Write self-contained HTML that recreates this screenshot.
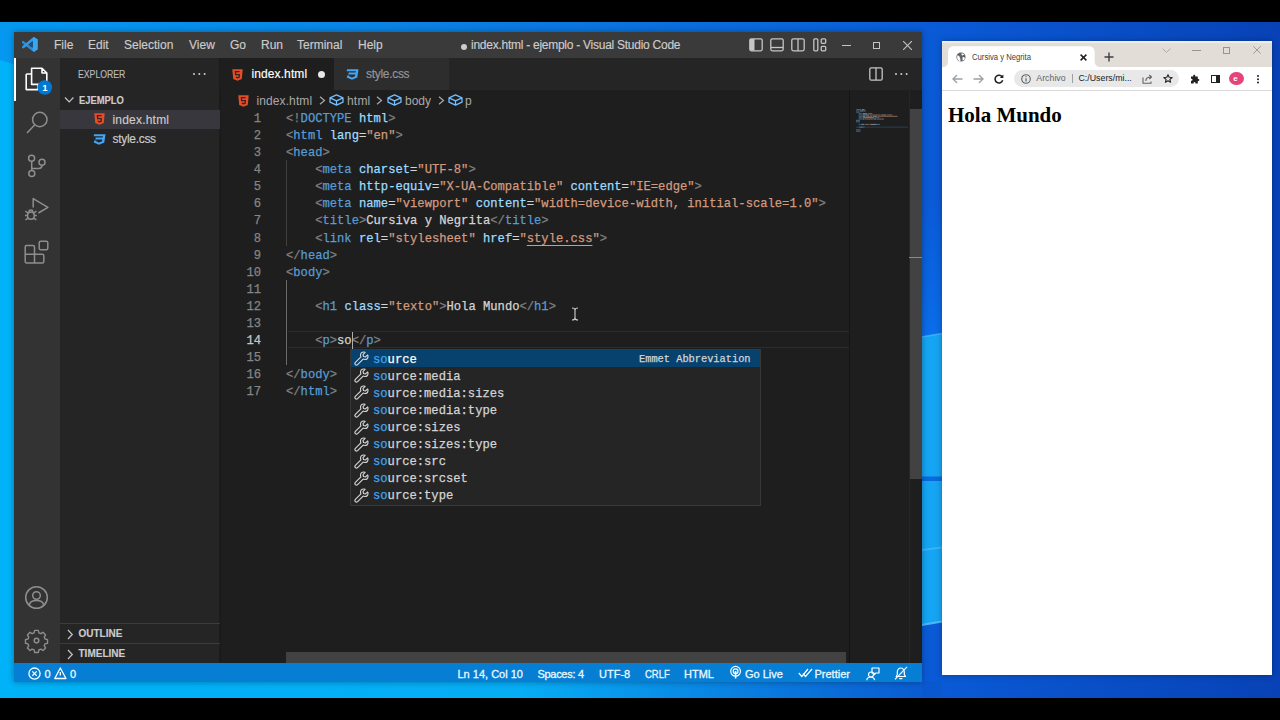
<!DOCTYPE html>
<html><head><meta charset="utf-8">
<style>
*{box-sizing:border-box;margin:0;padding:0}
html,body{width:1280px;height:720px;overflow:hidden;background:#000;font-family:"Liberation Sans",sans-serif}
.a{position:absolute}
#desk{left:0;top:22px;width:1280px;height:676px;overflow:hidden}
#vsc{left:14px;top:32px;width:908px;height:650px;background:#1e1e1e;overflow:hidden;box-shadow:0 0 6px rgba(0,0,0,.35)}
#title{left:0;top:0;width:908px;height:26px;background:#3a3a3a;color:#cccccc;font-size:12px}
#title span.m{position:absolute;top:6px;-webkit-text-stroke:0.15px currentColor}
#act{left:0;top:26px;width:46px;height:605px;background:#333333}
#side{left:46px;top:26px;width:160px;height:605px;background:#252526;color:#cccccc;font-size:12px;-webkit-text-stroke:0.15px currentColor}
#tabs{left:206px;top:26px;width:702px;height:32px;background:#252526;-webkit-text-stroke:0.15px currentColor}
#status{left:0;top:631px;width:908px;height:19px;background:#057ed4;color:#fff;font-size:11px}
#status span{position:absolute;top:4.7px;white-space:nowrap;-webkit-text-stroke:0.3px #eaf8ff;color:#eaf8ff}
.code{font-family:"Liberation Mono",monospace;font-size:12.17px;white-space:pre;line-height:17.1px;-webkit-text-stroke:0.25px currentColor}
.ln{position:absolute;left:206px;width:40px;text-align:right;color:#858585}
.cl{position:absolute;left:272px;color:#d4d4d4}
.g{color:#808080}.t{color:#569cd6}.at{color:#9cdcfe}.s{color:#d39a7e}.tx{color:#d4d4d4}u{text-underline-offset:3px;text-decoration-thickness:1px}
#chrome{left:942px;top:41px;width:330px;height:634px;background:#fff;overflow:hidden;box-shadow:0 0 6px rgba(0,0,0,.3)}
</style></head><body>
<div id="desk" class="a"><svg width="1280" height="676" viewBox="0 22 1280 676" style="position:absolute;left:0;top:0">
  <defs>
    <linearGradient id="bg" x1="0" y1="0" x2="1" y2="0"><stop offset="0" stop-color="#0598f0"/><stop offset="0.3" stop-color="#0a84e4"/><stop offset="0.6" stop-color="#0a68da"/><stop offset="0.73" stop-color="#0a5ad6"/><stop offset="1" stop-color="#0842b6"/></linearGradient>
    <linearGradient id="beam" x1="0" y1="0" x2="1" y2="0"><stop offset="0" stop-color="#00b2f8"/><stop offset="0.85" stop-color="#0aaaf4"/><stop offset="1" stop-color="#16a4f2"/></linearGradient>
    <linearGradient id="bfade" x1="0" y1="0" x2="1" y2="0"><stop offset="0" stop-color="#0958cf" stop-opacity="0"/><stop offset="1" stop-color="#0958cf" stop-opacity="1"/></linearGradient>
    <linearGradient id="gapg" x1="0" y1="0" x2="0" y2="1"><stop offset="0" stop-color="#0a6ae8" stop-opacity="0"/><stop offset="0.55" stop-color="#0a6ae8" stop-opacity="0"/><stop offset="1" stop-color="#0a70ec" stop-opacity="0.9"/></linearGradient>
  </defs>
  <rect x="0" y="22" width="1280" height="676" fill="url(#bg)"/>
  <rect x="915" y="22" width="30" height="316" fill="url(#gapg)"/>
  <polygon points="0,60 922,337 945,333 945,621 922,624.5 922,698 0,698" fill="url(#beam)"/>
  <rect x="520" y="681" width="422" height="17" fill="url(#bfade)"/>
  <line x1="920" y1="337.3" x2="945" y2="333" stroke="#4cc0ff" stroke-width="1.5" opacity="0.7"/>
  <line x1="880" y1="632.2" x2="945" y2="621" stroke="#5ccaff" stroke-width="2" opacity="0.8"/>
  <rect x="900" y="476.5" width="45" height="4.5" fill="#0a6adc"/>
  <polygon points="900,552 945,546 945,548 900,554" fill="#50c0fa" opacity="0.6"/>
</svg></div>

<div id="vsc" class="a">
  <div id="title" class="a">
    <svg class="a" style="left:8px;top:5px" width="16" height="15" viewBox="0 0 16 15"><g stroke-linecap="round"><line x1="1" y1="5.2" x2="12" y2="13.6" stroke="#2a8ad8" stroke-width="2.6"/><line x1="1.4" y1="10" x2="12" y2="1.3" stroke="#3098e6" stroke-width="2.6"/></g><polygon points="10.6,1.6 12.4,0.4 15.8,2.2 15.8,12.4 12.4,14.4 10.6,13.4" fill="#3aa6f0"/><polygon points="10.8,4.2 10.8,10.6 7.3,7.4" fill="#1c4f80"/></svg>
    <span class="m" style="left:40px">File</span>
    <span class="m" style="left:74px">Edit</span>
    <span class="m" style="left:110px">Selection</span>
    <span class="m" style="left:175px">View</span>
    <span class="m" style="left:216px">Go</span>
    <span class="m" style="left:247px">Run</span>
    <span class="m" style="left:283px">Terminal</span>
    <span class="m" style="left:344px">Help</span>
    <div class="a" style="left:447px;top:11.5px;width:6px;height:6px;border-radius:50%;background:#cccccc"></div>
    <span class="m" style="left:457px;letter-spacing:-0.26px">index.html - ejemplo - Visual Studio Code</span>
    <svg class="a" style="left:735px;top:6px" width="14" height="14" viewBox="0 0 14 14" fill="none" stroke="#c5c5c5" stroke-width="1.3"><rect x="0.8" y="0.8" width="12.4" height="12" rx="1.5"/><rect x="1" y="1" width="4.5" height="11.6" fill="#c5c5c5" stroke="none"/></svg>
    <svg class="a" style="left:756px;top:6px" width="14" height="14" viewBox="0 0 14 14" fill="none" stroke="#c5c5c5" stroke-width="1.3"><rect x="0.8" y="0.8" width="12.4" height="12" rx="1.5"/><line x1="1" y1="9.5" x2="13" y2="9.5"/></svg>
    <svg class="a" style="left:777px;top:6px" width="14" height="14" viewBox="0 0 14 14" fill="none" stroke="#c5c5c5" stroke-width="1.3"><rect x="0.8" y="0.8" width="12.4" height="12" rx="1.5"/><line x1="7" y1="1" x2="7" y2="13"/></svg>
    <svg class="a" style="left:799px;top:6px" width="14" height="14" viewBox="0 0 14 14" fill="none" stroke="#c5c5c5" stroke-width="1.3"><rect x="0.8" y="0.8" width="4" height="12" rx="1"/><rect x="8.2" y="0.8" width="4.5" height="4.5" rx="1"/><rect x="8.2" y="8.3" width="4.5" height="4.5" rx="1"/></svg>
    <div class="a" style="left:828px;top:13px;width:9px;height:1px;background:#c5c5c5"></div>
    <div class="a" style="left:859px;top:10px;width:7px;height:7px;border:1px solid #c5c5c5"></div>
    <svg class="a" style="left:889px;top:9px" width="9" height="9" viewBox="0 0 9 9" stroke="#c5c5c5" stroke-width="1.1"><line x1="0" y1="0" x2="9" y2="9"/><line x1="9" y1="0" x2="0" y2="9"/></svg>
  </div>
  <div id="act" class="a">
    <div class="a" style="left:0;top:0;width:2px;height:43px;background:#ffffff"></div>
    <svg class="a" style="left:0;top:0" width="46" height="604" viewBox="0 0 46 604" fill="none" stroke-linejoin="round">
      <g stroke="#ffffff" stroke-width="1.6">
        <path d="M12.2 16 H17.6 M12.2 16 V31.6 H23.9 V26.4 M17.6 10.3 H28 L32.8 15 V26.4 H17.6 Z M28 10.3 V15 H32.8"/>
      </g>
      <circle cx="30.8" cy="29.5" r="7.3" fill="#0078d4"/>
      <text x="30.8" y="33" fill="#fff" font-family="Liberation Sans" font-weight="bold" font-size="9.5" text-anchor="middle">1</text>
      <g stroke="#8e8e8e" stroke-width="1.5">
        <circle cx="25.8" cy="61.5" r="7.2"/>
        <line x1="20.6" y1="66.9" x2="13" y2="75"/>
        <circle cx="17.6" cy="100.3" r="3"/>
        <circle cx="17.8" cy="115.4" r="3"/>
        <circle cx="28" cy="104.3" r="3"/>
        <path d="M17.7 103.3 V112.4 M28 107.3 C28 109.5 26.5 110.5 24.5 110.5 H17.8"/>
        <path d="M19.2 149.6 V140.6 L33.9 149.3 L24.4 155"/>
        <path d="M13.6 157 C13.6 153 20.2 153 20.2 157 V158.5 C20.2 162.2 13.6 162.2 13.6 158.5 Z M14.8 153.8 C15 151.5 18.8 151.5 19 153.8 M11.4 153 L13.8 155 M22.4 153 L20 155 M11 157.6 H13.6 M22.8 157.6 H20.2 M11.4 162 L13.9 160.2 M22.4 162 L19.9 160.2"/>
        <path d="M12.6 187.4 H19 Q20.5 187.4 20.5 188.9 V196.2 H28.3 Q29.8 196.2 29.8 197.7 V203.4 Q29.8 204.9 28.3 204.9 H12.7 Q11.2 204.9 11.2 203.4 V188.9 Q11.2 187.4 12.6 187.4 Z M11.2 196.2 H20.5 V204.9"/>
        <rect x="25.2" y="183.2" width="8.6" height="8.6" rx="1.5"/>
        <circle cx="22.5" cy="539.5" r="10.8"/>
        <circle cx="22.5" cy="537.5" r="3.8"/>
        <path d="M15.2 547.3 C15.8 543.8 18.5 542.5 22.5 542.5 C26.5 542.5 29.2 543.8 29.8 547.3"/>
      </g>
      <g stroke="#8e8e8e" stroke-width="1.5">
        <path transform="translate(22.5 582.6) scale(0.92) translate(-22.5 -582.6)" id="gear" d="M20.5 571.5 h4 l0.6 2.7 l2.2 0.9 l2.3 -1.5 l2.8 2.8 l-1.5 2.3 l0.9 2.2 l2.7 0.6 v4 l-2.7 0.6 l-0.9 2.2 l1.5 2.3 l-2.8 2.8 l-2.3 -1.5 l-2.2 0.9 l-0.6 2.7 h-4 l-0.6 -2.7 l-2.2 -0.9 l-2.3 1.5 l-2.8 -2.8 l1.5 -2.3 l-0.9 -2.2 l-2.7 -0.6 v-4 l2.7 -0.6 l0.9 -2.2 l-1.5 -2.3 l2.8 -2.8 l2.3 1.5 l2.2 -0.9 z"/>
        <circle cx="22.5" cy="582.6" r="2.3"/>
      </g>
    </svg>
  </div>
  <div id="side" class="a">
    <div class="a" style="left:159px;top:0;width:2px;height:605px;background:#1b1b1b"></div>
    <span class="a" style="left:18px;top:10.5px;font-size:10px;color:#bbbbbb;transform:scaleX(0.87);transform-origin:0 0">EXPLORER</span>
    <div class="a" style="left:132.5px;top:15px;width:2.2px;height:2.2px;border-radius:50%;background:#cccccc;box-shadow:5.3px 0 0 #cccccc,10.6px 0 0 #cccccc"></div>
    <svg class="a" style="left:4px;top:38px" width="11" height="8" viewBox="0 0 11 8" fill="none" stroke="#c5c5c5" stroke-width="1.2"><path d="M1 1.5 L5.2 5.8 L9.4 1.5"/></svg>
    <span class="a" style="left:18.5px;top:36.5px;font-size:10px;font-weight:bold;color:#cccccc;transform:scaleX(0.94);transform-origin:0 0">EJEMPLO</span>
    <div class="a" style="left:0;top:51.5px;width:160px;height:19.5px;background:#37373d"></div>
    <svg class="a" style="left:33.5px;top:55px" width="11" height="12" viewBox="0 0 11 12"><path fill="#e44d26" d="M0.3 0.3 H10.7 L9.8 10 L5.5 11.7 L1.2 10 Z"/><path fill="none" stroke="#3a2420" stroke-width="1.3" d="M7.6 2.6 H3.4 L3.7 5.6 H7.3 L7.1 8.2 L5.5 8.9 L3.9 8.2"/></svg>
    <span class="a" style="left:52.5px;top:54.5px;color:#cccccc;letter-spacing:0.2px">index.html</span>
    <svg class="a" style="left:32.5px;top:75.5px" width="13" height="11" viewBox="0 0 13 11"><path fill="#42a5f5" d="M1 0.3 H12.5 L11.3 8.5 L6 10.8 L0.8 8.5 L1.2 6.5 H3.3 L3.1 7.3 L6 8.5 L9 7.3 L9.3 5.5 H2.3 L2.7 3.5 H9.6 L9.9 2.2 H0.7 Z"/></svg>
    <span class="a" style="left:52.5px;top:74px;color:#cccccc;letter-spacing:-0.3px">style.css</span>
    <div class="a" style="left:0;top:565px;width:160px;height:1px;background:#3c3c3c"></div>
    <svg class="a" style="left:6px;top:571px" width="8" height="11" viewBox="0 0 8 11" fill="none" stroke="#c5c5c5" stroke-width="1.2"><path d="M2 1 L6.3 5.5 L2 10"/></svg>
    <span class="a" style="left:18.5px;top:569.5px;font-size:10px;font-weight:bold;color:#cccccc;transform:scaleX(1);transform-origin:0 0">OUTLINE</span>
    <div class="a" style="left:0;top:585px;width:160px;height:1px;background:#3c3c3c"></div>
    <svg class="a" style="left:6px;top:591px" width="8" height="11" viewBox="0 0 8 11" fill="none" stroke="#c5c5c5" stroke-width="1.2"><path d="M2 1 L6.3 5.5 L2 10"/></svg>
    <span class="a" style="left:18.5px;top:589.5px;font-size:10px;font-weight:bold;color:#cccccc;transform:scaleX(1);transform-origin:0 0">TIMELINE</span>
  </div>
  <div id="tabs" class="a">
    <div class="a" style="left:0;top:0;width:114px;height:32px;background:#1e1e1e"></div>
    <div class="a" style="left:114px;top:0;width:115px;height:32px;background:#2d2d2d"></div>
    <svg class="a" style="left:12px;top:10.5px" width="11" height="12" viewBox="0 0 11 12"><path fill="#e44d26" d="M0.3 0.3 H10.7 L9.8 10 L5.5 11.7 L1.2 10 Z"/><path fill="none" stroke="#3a2420" stroke-width="1.3" d="M7.6 2.6 H3.4 L3.7 5.6 H7.3 L7.1 8.2 L5.5 8.9 L3.9 8.2"/></svg>
    <span class="a" style="left:31.5px;top:9.2px;font-size:12px;color:#ffffff;letter-spacing:0.1px">index.html</span>
    <div class="a" style="left:97.5px;top:12.5px;width:7px;height:7px;border-radius:50%;background:#e8e8e8"></div>
    <svg class="a" style="left:126px;top:10.5px" width="13" height="11" viewBox="0 0 13 11"><path fill="#42a5f5" d="M1 0.3 H12.5 L11.3 8.5 L6 10.8 L0.8 8.5 L1.2 6.5 H3.3 L3.1 7.3 L6 8.5 L9 7.3 L9.3 5.5 H2.3 L2.7 3.5 H9.6 L9.9 2.2 H0.7 Z"/></svg>
    <span class="a" style="left:146px;top:9.2px;font-size:12px;color:#969696;letter-spacing:-0.3px">style.css</span>
    <svg class="a" style="left:649px;top:9px" width="14" height="14" viewBox="0 0 14 14" fill="none" stroke="#c5c5c5" stroke-width="1.3"><rect x="0.8" y="0.8" width="12.4" height="12.4" rx="1.5"/><line x1="7" y1="1" x2="7" y2="13"/></svg>
    <div class="a" style="left:675px;top:15px;width:2.2px;height:2.2px;border-radius:50%;background:#cccccc;box-shadow:5.3px 0 0 #cccccc,10.6px 0 0 #cccccc"></div>
  </div>
  <div id="crumbs" class="a" style="left:206px;top:59px;width:702px;height:20px;font-size:12px;color:#a9a9a9">
    <svg class="a" style="left:18px;top:3.5px" width="11" height="12" viewBox="0 0 11 12"><path fill="#e44d26" d="M0.3 0.3 H10.7 L9.8 10 L5.5 11.7 L1.2 10 Z"/><path fill="none" stroke="#3a2420" stroke-width="1.3" d="M7.6 2.6 H3.4 L3.7 5.6 H7.3 L7.1 8.2 L5.5 8.9 L3.9 8.2"/></svg>
    <span class="a" style="left:36.5px;top:3px;letter-spacing:0.1px">index.html</span>
    <svg class="a" style="left:98.5px;top:4.5px" width="7" height="9" viewBox="0 0 7 9" fill="none" stroke="#a9a9a9" stroke-width="1.2"><path d="M1 0.8 L5.5 4.5 L1 8.2"/></svg>
    <svg class="a" style="left:108.5px;top:3.2px" width="15" height="12" viewBox="0 0 15 12" fill="none" stroke="#75beff" stroke-width="1.3" stroke-linejoin="round"><path d="M1 3.8 L7.5 0.8 L14 3.8 V8.2 L7.5 11.2 L1 8.2 Z M1 3.8 L7.5 6.8 L14 3.8 M7.5 6.8 V11.2"/></svg>
    <span class="a" style="left:127px;top:3px;letter-spacing:0.2px">html</span>
    <svg class="a" style="left:156px;top:4.5px" width="7" height="9" viewBox="0 0 7 9" fill="none" stroke="#a9a9a9" stroke-width="1.2"><path d="M1 0.8 L5.5 4.5 L1 8.2"/></svg>
    <svg class="a" style="left:166.5px;top:3.2px" width="15" height="12" viewBox="0 0 15 12" fill="none" stroke="#75beff" stroke-width="1.3" stroke-linejoin="round"><path d="M1 3.8 L7.5 0.8 L14 3.8 V8.2 L7.5 11.2 L1 8.2 Z M1 3.8 L7.5 6.8 L14 3.8 M7.5 6.8 V11.2"/></svg>
    <span class="a" style="left:185px;top:3px">body</span>
    <svg class="a" style="left:217.5px;top:4.5px" width="7" height="9" viewBox="0 0 7 9" fill="none" stroke="#a9a9a9" stroke-width="1.2"><path d="M1 0.8 L5.5 4.5 L1 8.2"/></svg>
    <svg class="a" style="left:227.5px;top:3.2px" width="15" height="12" viewBox="0 0 15 12" fill="none" stroke="#75beff" stroke-width="1.3" stroke-linejoin="round"><path d="M1 3.8 L7.5 0.8 L14 3.8 V8.2 L7.5 11.2 L1 8.2 Z M1 3.8 L7.5 6.8 L14 3.8 M7.5 6.8 V11.2"/></svg>
    <span class="a" style="left:245px;top:3px">p</span>
  </div>
  <div class="a code" style="left:200px;top:78.9px;width:47px;text-align:right;color:#858585">1
2
3
4
5
6
7
8
9
10
11
12
13
<span style="color:#c6c6c6">14</span>
15
16
17</div>
  <div class="a code" style="left:272px;top:78.9px;color:#d4d4d4"><span class="g">&lt;!</span><span class="t">DOCTYPE</span> <span class="at">html</span><span class="g">&gt;</span>
<span class="g">&lt;</span><span class="t">html</span> <span class="at">lang</span><span class="tx">=</span><span class="s">"en"</span><span class="g">&gt;</span>
<span class="g">&lt;</span><span class="t">head</span><span class="g">&gt;</span>
    <span class="g">&lt;</span><span class="t">meta</span> <span class="at">charset</span><span class="tx">=</span><span class="s">"UTF-8"</span><span class="g">&gt;</span>
    <span class="g">&lt;</span><span class="t">meta</span> <span class="at">http-equiv</span><span class="tx">=</span><span class="s">"X-UA-Compatible"</span> <span class="at">content</span><span class="tx">=</span><span class="s">"IE=edge"</span><span class="g">&gt;</span>
    <span class="g">&lt;</span><span class="t">meta</span> <span class="at">name</span><span class="tx">=</span><span class="s">"viewport"</span> <span class="at">content</span><span class="tx">=</span><span class="s">"width=device-width, initial-scale=1.0"</span><span class="g">&gt;</span>
    <span class="g">&lt;</span><span class="t">title</span><span class="g">&gt;</span><span class="tx">Cursiva y Negrita</span><span class="g">&lt;/</span><span class="t">title</span><span class="g">&gt;</span>
    <span class="g">&lt;</span><span class="t">link</span> <span class="at">rel</span><span class="tx">=</span><span class="s">"stylesheet"</span> <span class="at">href</span><span class="tx">=</span><span class="s">"<u>style.css</u>"</span><span class="g">&gt;</span>
<span class="g">&lt;/</span><span class="t">head</span><span class="g">&gt;</span>
<span class="g">&lt;</span><span class="t">body</span><span class="g">&gt;</span>

    <span class="g">&lt;</span><span class="t">h1</span> <span class="at">class</span><span class="tx">=</span><span class="s">"texto"</span><span class="g">&gt;</span><span class="tx">Hola Mundo</span><span class="g">&lt;/</span><span class="t">h1</span><span class="g">&gt;</span>

    <span class="g">&lt;</span><span class="t">p</span><span class="g">&gt;</span><span class="tx">so</span><span class="g">&lt;/</span><span class="t">p</span><span class="g">&gt;</span>

<span class="g">&lt;/</span><span class="t">body</span><span class="g">&gt;</span>
<span class="g">&lt;/</span><span class="t">html</span><span class="g">&gt;</span></div>

  <!-- editor extras -->
  <div class="a" style="left:274px;top:299.2px;width:562px;height:17.3px;border-top:1.5px solid #2c2c2c;border-bottom:1.5px solid #2c2c2c"></div>
  <div class="a" style="left:272px;top:128.3px;width:1px;height:85.5px;background:#404040"></div>
  <div class="a" style="left:272px;top:247.5px;width:1.2px;height:85.5px;background:#6a6a6a"></div>
  <div class="a" style="left:337.5px;top:299.8px;width:1.6px;height:17px;background:#aeafad"></div>
  <svg class="a" style="left:557px;top:275px" width="8" height="14" viewBox="0 0 8 14" fill="none" stroke="#d0d0d0" stroke-width="1.1"><path d="M1 1 C3 1 4 1.5 4 3 V11 C4 12.5 3 13 1 13 M7 1 C5 1 4 1.5 4 3 M4 11 C4 12.5 5 13 7 13"/></svg>
  <div class="a" style="left:835px;top:58px;width:1px;height:573px;background:#141414"></div>
  <div class="a" style="left:894.5px;top:77px;width:13.5px;height:369.5px;background:#424242"></div>
  <div class="a" style="left:894.5px;top:58px;width:1px;height:573px;background:#262626"></div>
  <div class="a" style="left:894.5px;top:224.5px;width:13.5px;height:1.5px;background:#8a8a8a"></div>
  <div class="a" style="left:271.5px;top:620px;width:560px;height:10.5px;background:#424242"></div>
  <div id="suggest" class="a" style="left:336px;top:316.5px;width:410.5px;height:157.5px;background:#252526;border:1px solid #383838">
  </div>
  <div class="a" style="left:337px;top:317.5px;width:409px;height:17.8px;background:#07416e"></div>
    <svg class="a" style="left:340px;top:319.2px" width="15" height="15" viewBox="0 0 15 15" fill="none" stroke="#d4d4d4" stroke-width="1.15" stroke-linejoin="round"><path d="M9.8 1 C8 1 6.5 2.5 6.5 4.3 C6.5 4.9 6.6 5.4 6.9 5.9 L1.4 11.4 C0.8 12 0.8 13 1.4 13.6 C2 14.2 3 14.2 3.6 13.6 L9.1 8.1 C9.6 8.4 10.1 8.5 10.7 8.5 C12.5 8.5 14 7 14 5.2 C14 4.7 13.9 4.3 13.7 3.9 L11.4 6 L9.5 5.5 L9 3.6 L11.1 1.3 C10.7 1.1 10.3 1 9.8 1 Z"/></svg>
  <div class="a code" style="left:359px;top:319.5px;color:#ffffff"><span style="color:#3ea6f0">so</span>urce</div>
  <svg class="a" style="left:340px;top:336.3px" width="15" height="15" viewBox="0 0 15 15" fill="none" stroke="#d4d4d4" stroke-width="1.15" stroke-linejoin="round"><path d="M9.8 1 C8 1 6.5 2.5 6.5 4.3 C6.5 4.9 6.6 5.4 6.9 5.9 L1.4 11.4 C0.8 12 0.8 13 1.4 13.6 C2 14.2 3 14.2 3.6 13.6 L9.1 8.1 C9.6 8.4 10.1 8.5 10.7 8.5 C12.5 8.5 14 7 14 5.2 C14 4.7 13.9 4.3 13.7 3.9 L11.4 6 L9.5 5.5 L9 3.6 L11.1 1.3 C10.7 1.1 10.3 1 9.8 1 Z"/></svg>
  <div class="a code" style="left:359px;top:336.6px;color:#d4d4d4"><span style="color:#3ea6f0">so</span>urce:media</div>
  <svg class="a" style="left:340px;top:353.4px" width="15" height="15" viewBox="0 0 15 15" fill="none" stroke="#d4d4d4" stroke-width="1.15" stroke-linejoin="round"><path d="M9.8 1 C8 1 6.5 2.5 6.5 4.3 C6.5 4.9 6.6 5.4 6.9 5.9 L1.4 11.4 C0.8 12 0.8 13 1.4 13.6 C2 14.2 3 14.2 3.6 13.6 L9.1 8.1 C9.6 8.4 10.1 8.5 10.7 8.5 C12.5 8.5 14 7 14 5.2 C14 4.7 13.9 4.3 13.7 3.9 L11.4 6 L9.5 5.5 L9 3.6 L11.1 1.3 C10.7 1.1 10.3 1 9.8 1 Z"/></svg>
  <div class="a code" style="left:359px;top:353.7px;color:#d4d4d4"><span style="color:#3ea6f0">so</span>urce:media:sizes</div>
  <svg class="a" style="left:340px;top:370.5px" width="15" height="15" viewBox="0 0 15 15" fill="none" stroke="#d4d4d4" stroke-width="1.15" stroke-linejoin="round"><path d="M9.8 1 C8 1 6.5 2.5 6.5 4.3 C6.5 4.9 6.6 5.4 6.9 5.9 L1.4 11.4 C0.8 12 0.8 13 1.4 13.6 C2 14.2 3 14.2 3.6 13.6 L9.1 8.1 C9.6 8.4 10.1 8.5 10.7 8.5 C12.5 8.5 14 7 14 5.2 C14 4.7 13.9 4.3 13.7 3.9 L11.4 6 L9.5 5.5 L9 3.6 L11.1 1.3 C10.7 1.1 10.3 1 9.8 1 Z"/></svg>
  <div class="a code" style="left:359px;top:370.8px;color:#d4d4d4"><span style="color:#3ea6f0">so</span>urce:media:type</div>
  <svg class="a" style="left:340px;top:387.6px" width="15" height="15" viewBox="0 0 15 15" fill="none" stroke="#d4d4d4" stroke-width="1.15" stroke-linejoin="round"><path d="M9.8 1 C8 1 6.5 2.5 6.5 4.3 C6.5 4.9 6.6 5.4 6.9 5.9 L1.4 11.4 C0.8 12 0.8 13 1.4 13.6 C2 14.2 3 14.2 3.6 13.6 L9.1 8.1 C9.6 8.4 10.1 8.5 10.7 8.5 C12.5 8.5 14 7 14 5.2 C14 4.7 13.9 4.3 13.7 3.9 L11.4 6 L9.5 5.5 L9 3.6 L11.1 1.3 C10.7 1.1 10.3 1 9.8 1 Z"/></svg>
  <div class="a code" style="left:359px;top:387.9px;color:#d4d4d4"><span style="color:#3ea6f0">so</span>urce:sizes</div>
  <svg class="a" style="left:340px;top:404.7px" width="15" height="15" viewBox="0 0 15 15" fill="none" stroke="#d4d4d4" stroke-width="1.15" stroke-linejoin="round"><path d="M9.8 1 C8 1 6.5 2.5 6.5 4.3 C6.5 4.9 6.6 5.4 6.9 5.9 L1.4 11.4 C0.8 12 0.8 13 1.4 13.6 C2 14.2 3 14.2 3.6 13.6 L9.1 8.1 C9.6 8.4 10.1 8.5 10.7 8.5 C12.5 8.5 14 7 14 5.2 C14 4.7 13.9 4.3 13.7 3.9 L11.4 6 L9.5 5.5 L9 3.6 L11.1 1.3 C10.7 1.1 10.3 1 9.8 1 Z"/></svg>
  <div class="a code" style="left:359px;top:405.0px;color:#d4d4d4"><span style="color:#3ea6f0">so</span>urce:sizes:type</div>
  <svg class="a" style="left:340px;top:421.8px" width="15" height="15" viewBox="0 0 15 15" fill="none" stroke="#d4d4d4" stroke-width="1.15" stroke-linejoin="round"><path d="M9.8 1 C8 1 6.5 2.5 6.5 4.3 C6.5 4.9 6.6 5.4 6.9 5.9 L1.4 11.4 C0.8 12 0.8 13 1.4 13.6 C2 14.2 3 14.2 3.6 13.6 L9.1 8.1 C9.6 8.4 10.1 8.5 10.7 8.5 C12.5 8.5 14 7 14 5.2 C14 4.7 13.9 4.3 13.7 3.9 L11.4 6 L9.5 5.5 L9 3.6 L11.1 1.3 C10.7 1.1 10.3 1 9.8 1 Z"/></svg>
  <div class="a code" style="left:359px;top:422.1px;color:#d4d4d4"><span style="color:#3ea6f0">so</span>urce:src</div>
  <svg class="a" style="left:340px;top:438.9px" width="15" height="15" viewBox="0 0 15 15" fill="none" stroke="#d4d4d4" stroke-width="1.15" stroke-linejoin="round"><path d="M9.8 1 C8 1 6.5 2.5 6.5 4.3 C6.5 4.9 6.6 5.4 6.9 5.9 L1.4 11.4 C0.8 12 0.8 13 1.4 13.6 C2 14.2 3 14.2 3.6 13.6 L9.1 8.1 C9.6 8.4 10.1 8.5 10.7 8.5 C12.5 8.5 14 7 14 5.2 C14 4.7 13.9 4.3 13.7 3.9 L11.4 6 L9.5 5.5 L9 3.6 L11.1 1.3 C10.7 1.1 10.3 1 9.8 1 Z"/></svg>
  <div class="a code" style="left:359px;top:439.2px;color:#d4d4d4"><span style="color:#3ea6f0">so</span>urce:srcset</div>
  <svg class="a" style="left:340px;top:456.0px" width="15" height="15" viewBox="0 0 15 15" fill="none" stroke="#d4d4d4" stroke-width="1.15" stroke-linejoin="round"><path d="M9.8 1 C8 1 6.5 2.5 6.5 4.3 C6.5 4.9 6.6 5.4 6.9 5.9 L1.4 11.4 C0.8 12 0.8 13 1.4 13.6 C2 14.2 3 14.2 3.6 13.6 L9.1 8.1 C9.6 8.4 10.1 8.5 10.7 8.5 C12.5 8.5 14 7 14 5.2 C14 4.7 13.9 4.3 13.7 3.9 L11.4 6 L9.5 5.5 L9 3.6 L11.1 1.3 C10.7 1.1 10.3 1 9.8 1 Z"/></svg>
  <div class="a code" style="left:359px;top:456.3px;color:#d4d4d4"><span style="color:#3ea6f0">so</span>urce:type</div>
  <div class="a code" style="left:625px;top:319.3px;font-size:10.33px;color:#d4d4d4">Emmet Abbreviation</div>
  <!-- minimap -->
  <svg class="a" style="left:842px;top:77px" width="52" height="30" viewBox="0 0 52 30"><g opacity="0.5" transform="scale(0.65 1)"><rect x="0" y="0.00" width="1" height="1.2" fill="#808080"/><rect x="1" y="0.00" width="7" height="1.2" fill="#569cd6"/><rect x="9" y="0.00" width="4" height="1.2" fill="#9cdcfe"/><rect x="13" y="0.00" width="1" height="1.2" fill="#808080"/><rect x="0" y="1.35" width="1" height="1.2" fill="#808080"/><rect x="1" y="1.35" width="4" height="1.2" fill="#569cd6"/><rect x="6" y="1.35" width="4" height="1.2" fill="#9cdcfe"/><rect x="10" y="1.35" width="1" height="1.2" fill="#d4d4d4"/><rect x="11" y="1.35" width="4" height="1.2" fill="#ce9178"/><rect x="0" y="2.70" width="1" height="1.2" fill="#808080"/><rect x="1" y="2.70" width="4" height="1.2" fill="#569cd6"/><rect x="5" y="2.70" width="1" height="1.2" fill="#808080"/><rect x="4" y="4.05" width="5" height="1.2" fill="#569cd6"/><rect x="10" y="4.05" width="7" height="1.2" fill="#9cdcfe"/><rect x="18" y="4.05" width="7" height="1.2" fill="#ce9178"/><rect x="4" y="5.40" width="5" height="1.2" fill="#569cd6"/><rect x="10" y="5.40" width="10" height="1.2" fill="#9cdcfe"/><rect x="21" y="5.40" width="17" height="1.2" fill="#ce9178"/><rect x="39" y="5.40" width="7" height="1.2" fill="#9cdcfe"/><rect x="47" y="5.40" width="9" height="1.2" fill="#ce9178"/><rect x="4" y="6.75" width="5" height="1.2" fill="#569cd6"/><rect x="10" y="6.75" width="4" height="1.2" fill="#9cdcfe"/><rect x="15" y="6.75" width="10" height="1.2" fill="#ce9178"/><rect x="26" y="6.75" width="7" height="1.2" fill="#9cdcfe"/><rect x="34" y="6.75" width="30" height="1.2" fill="#ce9178"/><rect x="4" y="8.10" width="6" height="1.2" fill="#569cd6"/><rect x="11" y="8.10" width="17" height="1.2" fill="#d4d4d4"/><rect x="29" y="8.10" width="7" height="1.2" fill="#569cd6"/><rect x="4" y="9.45" width="5" height="1.2" fill="#569cd6"/><rect x="10" y="9.45" width="3" height="1.2" fill="#9cdcfe"/><rect x="14" y="9.45" width="12" height="1.2" fill="#ce9178"/><rect x="27" y="9.45" width="4" height="1.2" fill="#9cdcfe"/><rect x="32" y="9.45" width="11" height="1.2" fill="#ce9178"/><rect x="0" y="10.80" width="6" height="1.2" fill="#569cd6"/><rect x="0" y="12.15" width="6" height="1.2" fill="#569cd6"/><rect x="4" y="14.85" width="3" height="1.2" fill="#569cd6"/><rect x="8" y="14.85" width="5" height="1.2" fill="#9cdcfe"/><rect x="14" y="14.85" width="7" height="1.2" fill="#ce9178"/><rect x="22" y="14.85" width="10" height="1.2" fill="#d4d4d4"/><rect x="32" y="14.85" width="5" height="1.2" fill="#569cd6"/><rect x="0" y="17.45" width="80" height="1.5" fill="#264f78" opacity="0.9"/><rect x="4" y="17.55" width="3" height="1.2" fill="#569cd6"/><rect x="7" y="17.55" width="2" height="1.2" fill="#d4d4d4"/><rect x="9" y="17.55" width="4" height="1.2" fill="#569cd6"/><rect x="0" y="20.25" width="7" height="1.2" fill="#569cd6"/><rect x="0" y="21.60" width="7" height="1.2" fill="#569cd6"/></g></svg>
  <div id="status" class="a">
    <svg class="a" style="left:13px;top:3.5px" width="40" height="13" viewBox="0 0 40 13" fill="none" stroke="#ffffff" stroke-width="1.3"><circle cx="7.5" cy="6.6" r="5.6"/><path d="M5.3 4.4 L9.7 8.8 M9.7 4.4 L5.3 8.8"/><path d="M46 0"/></svg>
    <span style="left:30.5px">0</span>
    <svg class="a" style="left:40px;top:3.5px" width="14" height="13" viewBox="0 0 14 13" fill="none" stroke="#ffffff" stroke-width="1.3" stroke-linejoin="round"><path d="M6.3 1 L12 11.5 H0.8 Z"/><path d="M6.3 5 V8.5"/></svg>
    <span style="left:56px">0</span>
    <span style="left:443.5px">Ln 14, Col 10</span>
    <span style="left:523.5px;letter-spacing:-0.3px">Spaces: 4</span>
    <span style="left:585px">UTF-8</span>
    <span style="left:630.5px;transform:scaleX(0.86);transform-origin:0 0">CRLF</span>
    <span style="left:670px">HTML</span>
    <svg class="a" style="left:716px;top:2px" width="12" height="15" viewBox="0 0 12 15" fill="none" stroke="#ffffff" stroke-width="1.2"><circle cx="5.6" cy="6.3" r="4.9"/><circle cx="5.6" cy="6.3" r="2.4"/><path d="M5.6 6 V13.5" stroke-width="1.6"/></svg>
    <span style="left:731px">Go Live</span>
    <svg class="a" style="left:784px;top:5px" width="15" height="10" viewBox="0 0 15 10" fill="none" stroke="#ffffff" stroke-width="1.2"><path d="M0.8 5 L3.8 8.5 L10 1 M5 5.5 L7.5 8.5 L14 1"/></svg>
    <span style="left:800.5px">Prettier</span>
    <svg class="a" style="left:852px;top:3.5px" width="14" height="14" viewBox="0 0 14 14" fill="none" stroke="#ffffff" stroke-width="1.2" stroke-linejoin="round"><path d="M6 1 H13 V6 H10 L8 7.8 V6 H6 Z"/><circle cx="5" cy="7.5" r="2.5"/><path d="M0.8 13.2 C1 10.5 3 10 5 10 C6.5 10 8 10.5 8.8 13.2"/></svg>
    <svg class="a" style="left:880px;top:3px" width="14" height="14" viewBox="0 0 14 14" fill="none" stroke="#ffffff" stroke-width="1.2" stroke-linejoin="round"><path d="M3 10.5 H11.5 L10.3 8.5 V6 C10.3 3.5 8.5 2 6.8 2 C5 2 3.3 3.5 3.3 6 V8.5 L2.2 10.5 Z M5.5 12 C5.8 13 7.8 13 8.1 12"/><path d="M1 13.3 L13 0.8"/></svg>
  </div>
</div>

<div id="chrome" class="a">
  <div class="a" style="left:0;top:0;width:330px;height:26px;background:#e3ddd8"></div><div class="a" style="left:0;top:0;width:330px;height:1.5px;background:#f0ecea"></div>
  <svg class="a" style="left:0;top:0" width="330" height="30" viewBox="0 0 330 30"><path fill="#ffffff" d="M0 26 C4 26 6 24 6 20 V11.5 C6 7.5 8 5.2 12 5.2 H146.7 C150.7 5.2 152.7 7.5 152.7 11.5 V20 C152.7 24 154.7 26 158.7 26 V27 H0 Z"/></svg>
  <svg class="a" style="left:14px;top:10.5px" width="10" height="10" viewBox="0 0 10 10"><circle cx="5" cy="5" r="4.6" fill="#5f6368"/><path fill="#fff" d="M1.3 3.6 C2.2 3.4 3 4 3.5 4.6 C4 5.2 3.6 6 4.2 6.5 C4.6 7 4.3 8 4.5 9.3 C2.8 8.9 1.5 7.6 1.1 5.9 Z M5.6 1.2 C6.6 1.3 7.6 1.8 8.3 2.6 C7.6 3 7 3.6 6.3 3.5 C5.6 3.4 5.2 2.5 5.6 1.2 Z M6.8 5 C7.6 5 8.4 5.3 9 5.8 C8.8 7 8 8.2 6.8 8.8 C6.6 7.6 6.2 6 6.8 5 Z"/></svg>
  <span class="a" style="left:29.8px;top:10.5px;font-size:8.5px;color:#3c4043;transform:scaleX(0.905);transform-origin:0 0;white-space:nowrap">Cursiva y Negrita</span>
  <svg class="a" style="left:138.3px;top:12.5px" width="7" height="7" viewBox="0 0 7 7" stroke="#202124" stroke-width="1.5"><path d="M0.6 0.6 L6.4 6.4 M6.4 0.6 L0.6 6.4"/></svg>
  <svg class="a" style="left:162px;top:11px" width="10" height="10" viewBox="0 0 10 10" stroke="#3c4043" stroke-width="1.4"><path d="M5 0.5 V9.5 M0.5 5 H9.5"/></svg>
  <svg class="a" style="left:220px;top:6.5px" width="9" height="5" viewBox="0 0 9 5" fill="none" stroke="#b0aca8" stroke-width="1"><path d="M0.5 0.5 L4.5 4.5 L8.5 0.5"/></svg>
  <div class="a" style="left:249.5px;top:8.5px;width:9px;height:1px;background:#98948f"></div>
  <div class="a" style="left:280.5px;top:5.5px;width:7.5px;height:7px;border:1px solid #98948f"></div>
  <svg class="a" style="left:311px;top:5px" width="8" height="8" viewBox="0 0 9 9" stroke="#98948f" stroke-width="1"><path d="M0.3 0.3 L8.7 8.7 M8.7 0.3 L0.3 8.7"/></svg>
  <div class="a" style="left:0;top:48.5px;width:330px;height:1px;background:#d9d9d9"></div>
  <svg class="a" style="left:10px;top:33px" width="11" height="10" viewBox="0 0 11 10" fill="none" stroke="#9aa0a6" stroke-width="1.3"><path d="M10.5 5 H1.2 M5 1 L1 5 L5 9"/></svg>
  <svg class="a" style="left:31px;top:33px" width="11" height="10" viewBox="0 0 11 10" fill="none" stroke="#9aa0a6" stroke-width="1.3"><path d="M0.5 5 H9.8 M6 1 L10 5 L6 9"/></svg>
  <svg class="a" style="left:52.3px;top:32.8px" width="10" height="10" viewBox="0 0 10 10" fill="none" stroke="#202124" stroke-width="1.6"><path d="M8.4 3.2 A3.9 3.9 0 1 0 8.7 6.3"/><path d="M9.4 0.5 V4 H5.9 Z" fill="#202124" stroke="none"/></svg>
  <div class="a" style="left:72.3px;top:29.2px;width:165px;height:17px;border-radius:8.5px;background:#e8e8e8"></div>
  <svg class="a" style="left:78.5px;top:32.5px" width="10" height="10" viewBox="0 0 10 10" fill="none" stroke="#5f6368" stroke-width="1.1"><circle cx="5" cy="5" r="4.3"/><path d="M5 4.2 V7.6" stroke-width="1.2"/><circle cx="5" cy="2.7" r="0.6" fill="#5f6368" stroke="none"/></svg>
  <span class="a" style="left:94.3px;top:32.4px;font-size:8.8px;color:#5f6368;white-space:nowrap">Archivo</span>
  <div class="a" style="left:130px;top:33px;width:1px;height:9px;background:#9aa0a6"></div>
  <span class="a" style="left:136.5px;top:32.4px;font-size:8.8px;color:#202124;white-space:nowrap">C:/Users/mi...</span>
  <svg class="a" style="left:199.5px;top:33px" width="11" height="10" viewBox="0 0 11 10" fill="none" stroke="#5f6368" stroke-width="1.1" stroke-linejoin="round"><path d="M1 3.5 V9.3 H9 V7.5 M3.8 7 C3.8 4.3 5.5 3 9.3 3 M7.3 1 L9.5 3 L7.3 5"/></svg>
  <svg class="a" style="left:221px;top:33px" width="10" height="9" viewBox="0 0 10 9" fill="none" stroke="#202124" stroke-width="1.1" stroke-linejoin="round"><path d="M5 0.7 L6.2 3.3 L9.2 3.5 L6.9 5.4 L7.6 8.3 L5 6.8 L2.4 8.3 L3.1 5.4 L0.8 3.5 L3.8 3.3 Z"/></svg>
  <svg class="a" style="left:247.5px;top:33px" width="10" height="10" viewBox="0 0 10 10"><path fill="#202124" d="M3.2 1.6 C3.2 0.4 5.2 0.4 5.2 1.6 V2.4 H7.8 V5 H8.4 C9.6 5 9.6 7 8.4 7 H7.8 V9.4 H5.4 V8.8 C5.4 7.6 3.6 7.6 3.6 8.8 V9.4 H1 V6.8 H1.6 C2.8 6.8 2.8 4.8 1.6 4.8 H1 V2.4 H3.2 Z"/></svg>
  <div class="a" style="left:269px;top:33.6px;width:9px;height:8.5px;border:1.5px solid #202124;border-right-width:4px"></div>
  <div class="a" style="left:287.3px;top:31.1px;width:14.4px;height:13.3px;border-radius:50%;background:#e5437a"></div>
  <span class="a" style="left:291.3px;top:32.5px;font-size:8px;color:#ffffff;font-weight:bold">e</span>
  <div class="a" style="left:315px;top:33.8px;width:2px;height:2px;border-radius:50%;background:#202124;box-shadow:0 3.3px 0 #202124,0 6.6px 0 #202124"></div>
  <span class="a" style="left:6px;top:61.5px;font-family:'Liberation Serif',serif;font-weight:bold;font-size:21px;color:#000;white-space:nowrap">Hola Mundo</span>
</div>
</body></html>
